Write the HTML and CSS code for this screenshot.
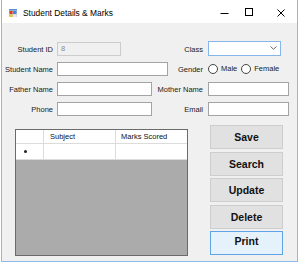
FILE: index.html
```html
<!DOCTYPE html>
<html>
<head>
<meta charset="utf-8">
<link rel="stylesheet" href="styles.css">
</head>
<body>
<div class="window">
  <div class="titlebar">
    <svg class="app-icon" width="8" height="8" viewBox="0 0 8 8">
      <rect x="0" y="0" width="8" height="8" fill="#c8c8c8"/>
      <rect x="0" y="0" width="8" height="1.5" fill="#5b8fd6"/>
      <rect x="0.5" y="2" width="3" height="3" fill="#e03a2f"/>
      <rect x="4" y="2" width="3.5" height="3" fill="#4f86e0"/>
      <rect x="0.5" y="5.5" width="3" height="2.5" fill="#f2c230"/>
      <rect x="4" y="5.5" width="3.5" height="2.5" fill="#e9e9e9"/>
    </svg>
    <span class="title">Student Details &amp; Marks</span>
    <div class="caps">
      <svg class="cap-min" width="9" height="9" viewBox="0 0 9 9"><line x1="0.5" y1="4.5" x2="8.5" y2="4.5" stroke="#000" stroke-width="1"/></svg>
      <svg class="cap-max" width="8" height="8" viewBox="0 0 8 8"><rect x="0.5" y="0.5" width="7" height="7" fill="none" stroke="#000" stroke-width="1"/></svg>
      <svg class="cap-close" width="8" height="8" viewBox="0 0 8 8"><path d="M0.5 0.5 L7.5 7.5 M7.5 0.5 L0.5 7.5" stroke="#000" stroke-width="1"/></svg>
    </div>
  </div>
  <div class="client">
    <div class="row">
      <div class="lbl-l">Student ID</div>
      <div class="tb tb-disabled w-id">8</div>
      <div class="right">
        <div class="lbl-r">Class</div>
        <div class="combo">
          <svg width="7" height="4" viewBox="0 0 7 4"><path d="M0.5 0.5 L3.5 3.2 L6.5 0.5" fill="none" stroke="#666" stroke-width="1"/></svg>
        </div>
      </div>
    </div>
    <div class="row">
      <div class="lbl-l">Student Name</div>
      <div class="tb w-name"></div>
      <div class="right">
        <div class="lbl-r">Gender</div>
        <div class="radios">
          <span class="radio"></span><span class="rtext">Male</span>
          <span class="radio radio-2"></span><span class="rtext">Female</span>
        </div>
      </div>
    </div>
    <div class="row">
      <div class="lbl-l">Father Name</div>
      <div class="tb w-short"></div>
      <div class="right">
        <div class="lbl-r">Mother Name</div>
        <div class="tb w-right"></div>
      </div>
    </div>
    <div class="row">
      <div class="lbl-l">Phone</div>
      <div class="tb w-short"></div>
      <div class="right">
        <div class="lbl-r">Email</div>
        <div class="tb w-right"></div>
      </div>
    </div>
    <div class="bottom">
      <div class="datagrid">
        <div class="grow ghead">
          <div class="gc gc-rh"></div>
          <div class="gc gc-subj">Subject</div>
          <div class="gc gc-marks">Marks Scored</div>
        </div>
        <div class="grow gdata">
          <div class="gc gc-rh"><span class="newrow"></span></div>
          <div class="gc gc-subj"></div>
          <div class="gc gc-marks"></div>
        </div>
      </div>
      <div class="buttons">
        <div class="btn">Save</div>
        <div class="btn">Search</div>
        <div class="btn">Update</div>
        <div class="btn">Delete</div>
        <div class="btn btn-default">Print</div>
      </div>
    </div>
  </div>
</div>
</body>
</html>
```
FILE: styles.css
```css
html, body {
  margin: 0;
  padding: 0;
  background: #ffffff;
}
body {
  width: 300px;
  height: 265px;
  overflow: hidden;
  font-family: "Liberation Sans", Arial, sans-serif;
  color: #1a1a1a;
}
.window {
  margin-left: 1px;
  width: 297px;
  height: 262px;
  box-sizing: border-box;
  border-left: 1px solid #8cbbea;
  border-right: 1px solid #8cbbea;
  border-bottom: 1px solid #8cbbea;
  display: flex;
  flex-direction: column;
}
.titlebar {
  height: 23px;
  flex: none;
  background: #ffffff;
  display: flex;
  align-items: center;
}
.app-icon {
  margin-left: 7px;
  margin-top: 3px;
  flex: none;
}
.title {
  margin-left: 6px;
  margin-top: 3px;
  font-size: 8.4px;
  color: #000;
  white-space: nowrap;
}
.caps {
  margin-left: auto;
  margin-right: 12px;
  display: flex;
  align-items: center;
  height: 23px;
}
.cap-min { margin-top: 3px; }
.cap-max { margin-left: 16px; margin-top: 1px; }
.cap-close { margin-left: 24px; margin-top: 2px; }

.client {
  flex: 1;
  background: #f0f0f0;
  padding-top: 19px;
  display: flex;
  flex-direction: column;
  gap: 6px;
}
.row {
  display: flex;
  align-items: center;
  height: 14px;
  padding-right: 8px;
  font-size: 7.5px;
}
.lbl-l {
  width: 51px;
  flex: none;
  text-align: right;
  white-space: nowrap;
  margin-right: 4px;
}
.tb {
  height: 14px;
  box-sizing: border-box;
  border: 1px solid #a3a3a3;
  background: #fff;
  flex: none;
}
.tb-disabled {
  background: #f0f0f0;
  border-color: #cccccc;
  color: #8a8a8a;
  padding-left: 3px;
  line-height: 12px;
  font-size: 7.5px;
}
.w-id { width: 64px; }
.w-name { width: 111px; }
.w-short { width: 95px; }
.w-right { width: 81px; }
.right {
  margin-left: auto;
  display: flex;
  align-items: center;
  width: 120px;
  flex: none;
}
.lbl-r {
  width: 34px;
  flex: none;
  display: flex;
  justify-content: flex-end;
  white-space: nowrap;
  margin-right: 5px;
}
.combo {
  width: 73px;
  height: 15px;
  margin-top: -2px;
  box-sizing: border-box;
  border: 1px solid #86b6ea;
  background: #fff;
  display: flex;
  align-items: center;
  justify-content: flex-end;
  padding-right: 3px;
}
.radios {
  display: flex;
  align-items: center;
  margin-top: -1px;
  white-space: nowrap;
}
.radio {
  width: 8px;
  height: 8px;
  border: 1px solid #444;
  border-radius: 50%;
  background: #fff;
  flex: none;
}
.radio-2 { margin-left: 4px; }
.rtext {
  margin-left: 3px;
}

.bottom {
  margin-top: 3px;
  display: flex;
  align-items: flex-start;
  padding-left: 13px;
}
.datagrid {
  margin-top: 4px;
  width: 173px;
  height: 127px;
  box-sizing: border-box;
  border: 1px solid #6b6b6b;
  background: #ababab;
  font-size: 7.5px;
  color: #111;
}
.grow {
  display: flex;
  background: #fff;
  border-bottom: 1px solid #dcdcdc;
}
.ghead { height: 13px; }
.gdata { height: 15px; }
.gc {
  box-sizing: border-box;
  border-right: 1px solid #dcdcdc;
  display: flex;
  align-items: center;
  white-space: nowrap;
}
.gc-rh {
  width: 28px;
  justify-content: center;
}
.gc-subj {
  width: 72px;
  padding-left: 6px;
}
.gc-marks {
  flex: 1;
  padding-left: 5px;
  border-right: none;
}
.newrow {
  width: 3px;
  height: 3px;
  border-radius: 50%;
  background: #222;
  margin-left: -8px;
}
.buttons {
  margin-left: 22px;
  width: 73px;
  display: flex;
  flex-direction: column;
  gap: 2.5px;
}
.btn {
  height: 24px;
  box-sizing: border-box;
  border: 1px solid #cdcdcd;
  background: #e1e1e1;
  display: flex;
  align-items: center;
  justify-content: center;
  font-size: 10.5px;
  font-weight: bold;
  color: #111;
}
.btn-default {
  background: #e5f1fb;
  border-color: #5ea5e8;
  padding-bottom: 5px;
}
```
